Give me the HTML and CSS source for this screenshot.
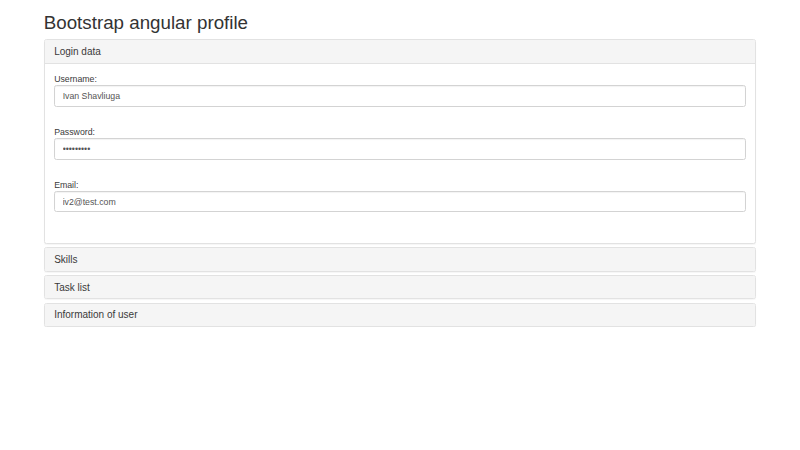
FILE: index.html
```html
<!DOCTYPE html>
<html lang="en">
<head>
<meta charset="utf-8">
<title>Bootstrap angular profile</title>
<link rel="stylesheet" href="styles.css">
</head>
<body>
<div class="container">
  <h2 class="page-title">Bootstrap angular profile</h2>
  <div class="panel-group">
    <div class="panel">
      <div class="panel-heading"><h4 class="panel-title">Login data</h4></div>
      <div class="panel-body">
        <div class="form-group">
          <label class="label" for="username">Username:</label>
          <input class="form-control" id="username" type="text" value="Ivan Shavliuga">
        </div>
        <div class="form-group">
          <label class="label" for="password">Password:</label>
          <input class="form-control" id="password" type="password" value="ivan12345">
        </div>
        <div class="form-group">
          <label class="label" for="email">Email:</label>
          <input class="form-control" id="email" type="email" value="iv2@test.com">
        </div>
      </div>
    </div>
    <div class="panel">
      <div class="panel-heading collapsed"><h4 class="panel-title">Skills</h4></div>
    </div>
    <div class="panel">
      <div class="panel-heading collapsed"><h4 class="panel-title">Task list</h4></div>
    </div>
    <div class="panel">
      <div class="panel-heading collapsed"><h4 class="panel-title">Information of user</h4></div>
    </div>
  </div>
</div>
</body>
</html>
```

FILE: styles.css
```css
* {
  box-sizing: border-box;
}

html, body {
  margin: 0;
  padding: 0;
  background: #ffffff;
}

body {
  font-family: "Liberation Sans", Arial, Helvetica, sans-serif;
  font-size: 8.75px;
  line-height: 12.5px;
  color: #333333;
}

.container {
  width: 712.5px;
  margin: 0 auto;
}

.page-title {
  margin: 12.5px 0 6.25px;
  font-size: 18.75px;
  line-height: 20.6px;
  font-weight: 400;
  color: #333333;
}

.panel-group {
  display: flex;
  flex-direction: column;
  gap: 3.2px;
}

.panel {
  background: #ffffff;
  border: 1px solid #e2e2e2;
  border-radius: 2.5px;
  box-shadow: 0 1px 1px rgba(0, 0, 0, 0.04);
}

.panel-heading {
  background: #f5f5f5;
  padding: 5.6px 9.375px;
  border-bottom: 1px solid #e2e2e2;
  border-radius: 1.5px 1.5px 0 0;
}

.panel-heading.collapsed {
  border-bottom: 0;
  border-radius: 1.5px;
  padding-top: 5.8px;
  padding-bottom: 5.8px;
}

.panel-title {
  margin: 0;
  font-size: 10px;
  line-height: 11px;
  font-weight: 400;
  color: #3a3a3a;
}

.panel-body {
  padding: 9.375px 9.375px 11.4px;
}

.form-group {
  margin-bottom: 19.1px;
}

.label {
  display: block;
  font-size: 8.75px;
  line-height: 12.5px;
  font-weight: 400;
  color: #3a3a3a;
}

.form-control {
  display: block;
  width: 100%;
  height: 21.25px;
  padding: 3.75px 7.5px;
  font-family: "Liberation Sans", Arial, Helvetica, sans-serif;
  font-size: 8.75px;
  line-height: 12.5px;
  color: #555555;
  background: #ffffff;
  border: 1px solid #d3d3d3;
  border-radius: 2.5px;
  box-shadow: inset 0 1px 1px rgba(0, 0, 0, 0.05);
  outline: none;
}
```
